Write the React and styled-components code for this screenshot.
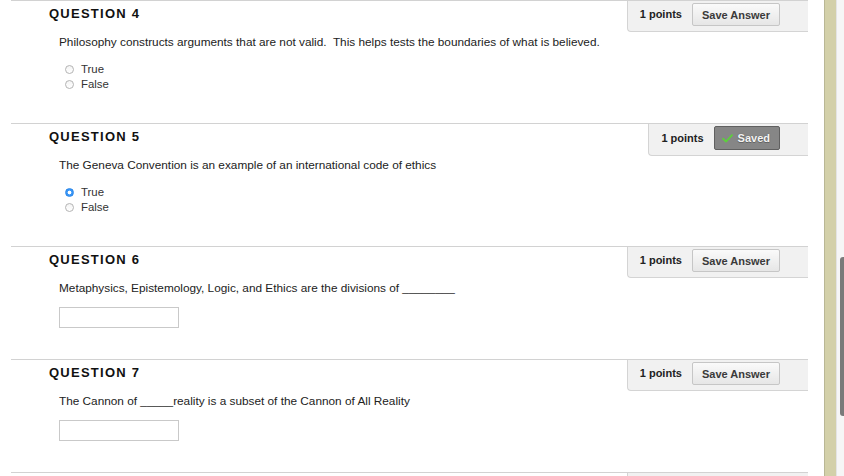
import styled, { createGlobalStyle } from "styled-components";

const GlobalStyle = createGlobalStyle`
    body {
        margin: 0;
        background: #fff;
        font-family: "Liberation Sans", Arial, Helvetica, sans-serif;
        -webkit-font-smoothing: antialiased;
    }
`

const questions = [
    {
        number: 4,
        text: "Philosophy constructs arguments that are not valid.\u00a0 This helps tests the boundaries of what is believed.",
        kind: "radio",
        selected: null,
        saved: false,
    },
    {
        number: 5,
        text: "The Geneva Convention is an example of an international code of ethics",
        kind: "radio",
        selected: "True",
        saved: true,
    },
    {
        number: 6,
        text: "Metaphysics, Epistemology, Logic, and Ethics are the divisions of ________",
        kind: "input",
        saved: false,
    },
    {
        number: 7,
        text: "The Cannon of _____reality is a subset of the Cannon of All Reality",
        kind: "input",
        saved: false,
    },
];

const CheckIcon = () => (
    <svg width="11" height="9" viewBox="0 0 11 9">
        <path d="M1 4.6 L4 7.6 L10 1.2" fill="none" stroke="#5ccf3c" strokeWidth="1.8" strokeLinecap="round" strokeLinejoin="round" />
    </svg>
);

const App = () => {
    return (
        <>
            <GlobalStyle />
            <Page>
                <Main>
                    {questions.map((q) => (
                        <Block key={q.number}>
                            <Content>
                                <Heading>QUESTION {q.number}</Heading>
                                <QuestionText>{q.text}</QuestionText>
                                {q.kind === "radio" && (
                                    <Options>
                                        {["True", "False"].map((opt) => (
                                            <Option key={opt}>
                                                <Radio $checked={q.selected === opt} />
                                                <span>{opt}</span>
                                            </Option>
                                        ))}
                                    </Options>
                                )}
                                {q.kind === "input" && <AnswerInput type="text" />}
                            </Content>
                            <PointsBox>
                                <Points>1 points</Points>
                                {q.saved ? (
                                    <SavedButton>
                                        <CheckIcon />
                                        Saved
                                    </SavedButton>
                                ) : (
                                    <SaveButton>Save Answer</SaveButton>
                                )}
                            </PointsBox>
                        </Block>
                    ))}
                    {/* next question, only its top edge is on screen */}
                    <Block>
                        <Content />
                        <PointsBox $stub />
                    </Block>
                </Main>
                <Gutter />
                <Strip />
                <Track>
                    <Thumb />
                </Track>
            </Page>
        </>
    );
};

const Page = styled.div`
    display: flex;
    height: 476px;
    overflow: hidden;
`

const Main = styled.div`
    width: 808px;
    flex-shrink: 0;
    box-sizing: border-box;
    padding-left: 11px;
    display: flex;
    flex-direction: column;
`

const Gutter = styled.div`
    width: 16px;
    flex-shrink: 0;
    background: #fff;
`

const Strip = styled.div`
    width: 12px;
    flex-shrink: 0;
    box-sizing: border-box;
    background: #d3d0a9;
    border-left: 1px solid #b9b795;
`

const Track = styled.div`
    width: 8px;
    flex-shrink: 0;
    box-sizing: border-box;
    background: #f6f6f6;
    border-left: 1px solid #e4e4e4;
    padding: 257px 0 0 3px;
`

const Thumb = styled.div`
    width: 6px;
    height: 159px;
    border-radius: 3px;
    background: #7a7a7a;
`

const Block = styled.div`
    display: flex;
    justify-content: space-between;
    align-items: flex-start;
    border-top: 1px solid #d2d2d2;
    flex-shrink: 0;
`

const Content = styled.div`
    padding: 0 0 31px 38px;
    display: flex;
    flex-direction: column;
    align-items: flex-start;
`

const Heading = styled.div`
    padding-top: 5px;
    font-size: 13px;
    line-height: 15px;
    font-weight: bold;
    letter-spacing: 1.25px;
    color: #111;
`

const QuestionText = styled.div`
    margin: 14px 0 0 10px;
    font-size: 11.8px;
    line-height: 14px;
    color: #222;
`

const Options = styled.div`
    margin: 12px 0 0 16px;
    padding-bottom: 1px;
    display: flex;
    flex-direction: column;
`

const Option = styled.div`
    display: flex;
    align-items: center;
    gap: 7px;
    height: 15px;
    font-size: 11.4px;
    color: #333;
`

const Radio = styled.span`
    width: 9px;
    height: 9px;
    margin-top: 2px;
    box-sizing: border-box;
    border-radius: 50%;
    border: ${(p) => (p.$checked ? "1px solid #2b87ea" : "1px solid #b4b4b4")};
    background: ${(p) =>
        p.$checked
            ? "radial-gradient(circle, #fff 0 1.6px, #3a97f6 2.2px)"
            : "linear-gradient(#f4f4f4, #ffffff)"};
`

const AnswerInput = styled.input`
    margin: 12px 0 0 10px;
    width: 120px;
    height: 21px;
    box-sizing: border-box;
    border: 1px solid #c9c9c9;
    padding: 0 4px;
    background: #fff;
    outline: none;
`

const PointsBox = styled.div`
    display: flex;
    align-items: center;
    gap: 10px;
    box-sizing: border-box;
    width: ${(p) => (p.$stub ? "181px" : "auto")};
    height: ${(p) => (p.$stub ? "31px" : "auto")};
    padding: 2px 28px 5px 12px;
    background: #f1f1f1;
    border-left: 1px solid #d4d4d4;
    border-bottom: 1px solid #d4d4d4;
    border-bottom-left-radius: 4px;
`

const Points = styled.span`
    font-size: 11px;
    font-weight: bold;
    color: #222;
    margin-top: -1px;
`

const SaveButton = styled.button`
    height: 23px;
    padding: 0 9px;
    font-family: inherit;
    font-size: 11px;
    font-weight: bold;
    color: #3a3a3a;
    background: linear-gradient(#fafafa, #e6e6e6);
    border: 1px solid #c6c6c6;
    border-radius: 2px;
    cursor: pointer;
`

const SavedButton = styled.button`
    height: 24px;
    display: flex;
    align-items: center;
    gap: 5px;
    padding: 0 9px 0 7px;
    font-family: inherit;
    font-size: 11px;
    font-weight: bold;
    color: #f4f4f4;
    text-shadow: 0 0 1px #555, 0 1px 0 #666;
    background: #868686;
    border: 1px solid #606060;
    border-radius: 2px;
`

export default App;
